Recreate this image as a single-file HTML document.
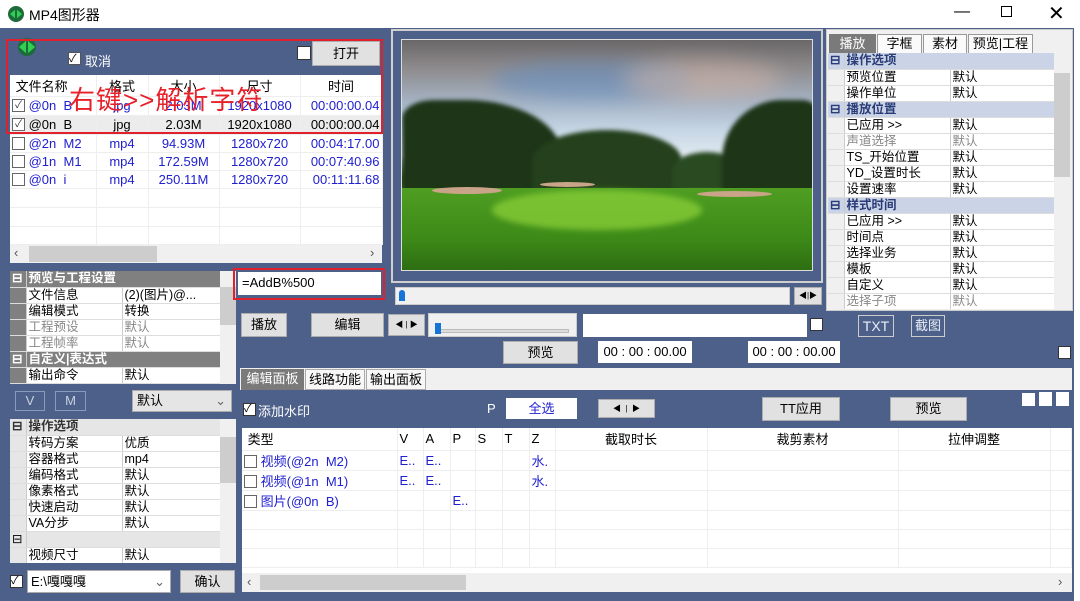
<!DOCTYPE html>
<html><head><meta charset="utf-8"><style>
*{box-sizing:border-box;margin:0;padding:0}
body{width:1080px;height:601px;overflow:hidden;background:#4d6089;font-family:"Liberation Sans","Noto Sans CJK SC",sans-serif;font-size:13px;color:#000;position:relative}
.a{position:absolute}
.w{background:#fff}
.btn{position:absolute;background:#e1e1e1;border:1px solid #adadad;text-align:center;font-size:13px}
.cb{position:absolute;width:13px;height:13px;background:#fff;border:1px solid #333}
.ic{display:inline-block;width:13px;height:13px;border:1px solid #666;background:#fff;vertical-align:middle;position:relative;font-size:10px;line-height:11px;text-align:center;color:#333;margin-top:-2px}
.blue{color:#2020d0}
.g td{border-right:1px solid #eee;border-bottom:1px solid #eee}
table{border-collapse:collapse;table-layout:fixed}
td{white-space:nowrap;overflow:hidden;padding:0 2px}
.pg td{height:16px;line-height:15px;font-size:12.5px;border-bottom:1px solid #ddd;border-right:1px solid #ccc}
</style></head><body>
<!-- title -->
<div class="a w" style="left:0;top:0;width:1080px;height:28px"></div>
<svg class="a" style="left:7px;top:5px" width="18" height="18"><circle cx="9" cy="9" r="8" fill="#1d6b3a"/><path d="M3 9L9 4L15 9L9 14Z" fill="#32d052"/><rect x="8" y="3" width="2" height="12" fill="#1d6b3a"/></svg>
<div class="a" style="left:29px;top:5px;font-size:14px">MP4图形器</div>
<div class="a" style="left:954px;top:3px;font-size:16px">—</div>
<div class="a" style="left:1001px;top:6px;width:11px;height:11px;border:1px solid #000"></div>
<div class="a" style="left:1048px;top:1px;font-size:20px;font-weight:300">✕</div>
<div class="a" style="left:1074px;top:28px;width:6px;height:573px;background:#fff"></div>

<!-- file list area -->
<svg class="a" style="left:15px;top:36px" width="24" height="24"><circle cx="12" cy="11" r="9" fill="#1d6b3a"/><path d="M4 11L12 4L20 11L12 18Z" fill="#32d052"/><rect x="11" y="3" width="2" height="16" fill="#1d6b3a"/></svg>
<div class="cb" style="left:68px;top:52px;border-color:#555"><span style="position:absolute;left:0;top:-3px;font-size:11px">✓</span></div>
<div class="a" style="left:85px;top:51px;color:#fff">取消</div>
<div class="cb" style="left:297px;top:46px;width:14px;height:14px"></div>
<div class="btn" style="left:312px;top:41px;width:68px;height:25px;line-height:23px">打开</div>
<div class="a w" style="left:10px;top:75px;width:372px;height:188px">
 <table class="g" style="width:372px;font-size:13px">
  <col style="width:86px"><col style="width:52px"><col style="width:71px"><col style="width:81px"><col style="width:82px">
  <tr style="height:21px"><td>&nbsp;文件名称</td><td style="text-align:center">格式</td><td style="text-align:center">大小</td><td style="text-align:center">尺寸</td><td style="text-align:center">时间</td></tr>
  <tr style="height:19px" class="blue"><td><span class="ic">✓</span> @0n&nbsp; B</td><td style="text-align:center">jpg</td><td style="text-align:center">2.03M</td><td style="text-align:center">1920x1080</td><td style="text-align:right">00:00:00.04</td></tr>
  <tr style="height:19px;background:#ececec"><td><span class="ic">✓</span> @0n&nbsp; B</td><td style="text-align:center">jpg</td><td style="text-align:center">2.03M</td><td style="text-align:center">1920x1080</td><td style="text-align:right">00:00:00.04</td></tr>
  <tr style="height:18px" class="blue"><td><span class="ic"></span> @2n&nbsp; M2</td><td style="text-align:center">mp4</td><td style="text-align:center">94.93M</td><td style="text-align:center">1280x720</td><td style="text-align:right">00:04:17.00</td></tr>
  <tr style="height:18px" class="blue"><td><span class="ic"></span> @1n&nbsp; M1</td><td style="text-align:center">mp4</td><td style="text-align:center">172.59M</td><td style="text-align:center">1280x720</td><td style="text-align:right">00:07:40.96</td></tr>
  <tr style="height:18px" class="blue"><td><span class="ic"></span> @0n&nbsp; i</td><td style="text-align:center">mp4</td><td style="text-align:center">250.11M</td><td style="text-align:center">1280x720</td><td style="text-align:right">00:11:11.68</td></tr>
  <tr style="height:19px"><td></td><td></td><td></td><td></td><td></td></tr>
  <tr style="height:19px"><td></td><td></td><td></td><td></td><td></td></tr>
  <tr style="height:18px"><td></td><td></td><td></td><td></td><td></td></tr>
 </table>
 <div class="a" style="left:0;top:170px;width:372px;height:18px;background:#f0f0f0"></div>
 <div class="a" style="left:19px;top:171px;width:128px;height:16px;background:#cdcdcd"></div>
 <div class="a" style="left:4px;top:170px;color:#555">‹</div><div class="a" style="left:360px;top:170px;color:#555">›</div>
</div>
<div class="a" style="left:6px;top:39px;width:377px;height:95px;border:2px solid #e0202a"></div>
<div class="a" style="left:69px;top:80px;font-size:26px;color:#e8202a;letter-spacing:1px">右键&gt;&gt;解析字符</div>

<!-- left property grid 1 -->
<div class="a w" style="left:10px;top:271px;width:226px;height:113px;overflow:hidden">
<table class="pg" style="width:210px">
<col style="width:16px"><col style="width:96px"><col style="width:98px">
<tr style="background:#808080;color:#fff;font-weight:bold"><td>⊟</td><td colspan="2">预览与工程设置</td></tr>
<tr><td style="background:#808080"></td><td>文件信息</td><td>(2)(图片)@...</td></tr>
<tr><td style="background:#808080"></td><td>编辑模式</td><td>转换</td></tr>
<tr style="color:#888"><td style="background:#808080"></td><td>工程预设</td><td>默认</td></tr>
<tr style="color:#888"><td style="background:#808080"></td><td>工程帧率</td><td>默认</td></tr>
<tr style="background:#808080;color:#fff;font-weight:bold"><td>⊟</td><td colspan="2">自定义|表达式</td></tr>
<tr><td style="background:#808080"></td><td>输出命令</td><td>默认</td></tr>
</table>
<div class="a" style="left:210px;top:0;width:16px;height:113px;background:#f0f0f0"></div>
<div class="a" style="left:210px;top:16px;width:16px;height:38px;background:#cdcdcd"></div>
</div>
<div class="a" style="left:15px;top:391px;width:30px;height:20px;border:1px solid #8a9abb;color:#c8d0e0;text-align:center;line-height:18px">V</div>
<div class="a" style="left:55px;top:391px;width:31px;height:20px;border:1px solid #8a9abb;color:#c8d0e0;text-align:center;line-height:18px">M</div>
<div class="a" style="left:132px;top:390px;width:100px;height:22px;background:#e5e5e5;border:1px solid #aaa;line-height:20px;padding-left:4px">默认<span style="position:absolute;right:5px;color:#666">⌄</span></div>

<!-- left property grid 2 -->
<div class="a w" style="left:10px;top:419px;width:226px;height:144px;overflow:hidden">
<table class="pg" style="width:210px">
<col style="width:16px"><col style="width:96px"><col style="width:98px">
<tr style="background:#e6e6e6;font-weight:bold;color:#333"><td>⊟</td><td colspan="2">操作选项</td></tr>
<tr><td style="background:#e6e6e6"></td><td>转码方案</td><td>优质</td></tr>
<tr><td style="background:#e6e6e6"></td><td>容器格式</td><td>mp4</td></tr>
<tr><td style="background:#e6e6e6"></td><td>编码格式</td><td>默认</td></tr>
<tr><td style="background:#e6e6e6"></td><td>像素格式</td><td>默认</td></tr>
<tr><td style="background:#e6e6e6"></td><td>快速启动</td><td>默认</td></tr>
<tr><td style="background:#e6e6e6"></td><td>VA分步</td><td>默认</td></tr>
<tr style="background:#e6e6e6"><td>⊟</td><td colspan="2"></td></tr>
<tr><td style="background:#e6e6e6"></td><td>视频尺寸</td><td>默认</td></tr>
</table>
<div class="a" style="left:210px;top:0;width:16px;height:144px;background:#f0f0f0"></div>
<div class="a" style="left:210px;top:18px;width:16px;height:46px;background:#cdcdcd"></div>
</div>
<div class="cb" style="left:10px;top:575px;font-size:11px;line-height:11px">✓</div>
<div class="a" style="left:27px;top:570px;width:144px;height:23px;background:#fff;border:1px solid #aaa;line-height:21px;padding-left:3px">E:\嘎嘎嘎<span style="position:absolute;right:5px;color:#666">⌄</span></div>
<div class="btn" style="left:180px;top:570px;width:55px;height:23px;line-height:21px">确认</div>

<!-- image panel -->
<div class="a" style="left:391px;top:29px;width:432px;height:254px;border:2px solid #cfcfcf;background:#4d6089"></div>
<div class="a" style="left:401px;top:39px;width:412px;height:232px;border:1px solid #ddd;overflow:hidden;background:linear-gradient(180deg,#6a6769 0%,#8d8a8c 12%,#a7b6c8 28%,#c8d8e6 40%,#dfe8ef 50%,#2e5a22 60%,#3f8a1e 66%,#55a826 75%,#3e8a1a 88%,#2b6a12 100%)">
 <div class="a" style="left:90px;top:20px;width:200px;height:40px;background:#5a8cc8;border-radius:50%;opacity:.45;filter:blur(8px)"></div>
 <div class="a" style="left:220px;top:20px;width:160px;height:40px;background:#d8b8a8;border-radius:50%;opacity:.5;filter:blur(10px)"></div>
 <div class="a" style="left:0;top:60px;width:160px;height:92px;background:#1e3518;border-radius:20% 60% 0 0;filter:blur(2px)"></div>
 <div class="a" style="left:130px;top:90px;width:150px;height:62px;background:#24401c;border-radius:50% 50% 0 0;filter:blur(2px)"></div>
 <div class="a" style="left:270px;top:112px;width:70px;height:38px;background:#2a4a22;border-radius:50% 50% 0 0;filter:blur(2px)"></div>
 <div class="a" style="left:320px;top:60px;width:100px;height:100px;background:#1e3518;border-radius:60% 20% 0 0;filter:blur(2px)"></div>
 <div class="a" style="left:0;top:148px;width:412px;height:84px;background:linear-gradient(180deg,#4f9e22,#3d8a18 60%,#2d6c12)"></div>
 <div class="a" style="left:90px;top:150px;width:210px;height:40px;background:#86cc36;border-radius:50%;opacity:.8;filter:blur(3px)"></div>
 <div class="a" style="left:30px;top:147px;width:70px;height:7px;background:#c9a488;border-radius:50%"></div>
 <div class="a" style="left:138px;top:142px;width:55px;height:5px;background:#c9a488;border-radius:50%"></div>
 <div class="a" style="left:295px;top:151px;width:75px;height:6px;background:#c9a488;border-radius:50%"></div>
</div>
<div class="a" style="left:395px;top:287px;width:395px;height:18px;background:#f0f0f0;border:1px solid #ccc"></div>
<div class="a" style="left:399px;top:290px;width:6px;height:11px;background:#1673d8;border-radius:3px 3px 0 0"></div>
<div class="btn" style="left:794px;top:287px;width:28px;height:18px;font-size:8px;line-height:16px">◀|▶</div>

<!-- input -->
<div class="a" style="left:233px;top:268px;width:152px;height:32px;border:2px solid #e0202a"></div>
<div class="a w" style="left:238px;top:272px;width:143px;height:23px;line-height:22px;padding-left:4px">=AddB%500</div>

<!-- control rows -->
<div class="btn" style="left:241px;top:313px;width:46px;height:24px;line-height:22px">播放</div>
<div class="btn" style="left:311px;top:313px;width:73px;height:24px;line-height:22px">编辑</div>
<div class="btn" style="left:388px;top:314px;width:37px;height:22px;font-size:8px;line-height:20px">◀ | ▶</div>
<div class="a" style="left:428px;top:313px;width:149px;height:24px;background:#f0f0f0;border:1px solid #ccc"></div>
<div class="a" style="left:439px;top:329px;width:130px;height:4px;background:#ddd;border:1px solid #bbb"></div>
<div class="a" style="left:435px;top:323px;width:6px;height:11px;background:#1673d8"></div>
<div class="a w" style="left:583px;top:314px;width:224px;height:23px"></div>
<div class="cb" style="left:810px;top:318px"></div>
<div class="a" style="left:858px;top:315px;width:36px;height:22px;border:1px solid #ccc;color:#e8eef8;text-align:center;line-height:20px;font-size:14px">TXT</div>
<div class="a" style="left:911px;top:315px;width:34px;height:22px;border:1px solid #ccc;color:#e8eef8;text-align:center;line-height:20px">截图</div>
<div class="btn" style="left:503px;top:341px;width:75px;height:23px;line-height:21px">预览</div>
<div class="a w" style="left:598px;top:341px;width:94px;height:22px;line-height:22px;text-align:center">00 : 00 : 00.00</div>
<div class="a w" style="left:748px;top:341px;width:92px;height:22px;line-height:22px;text-align:center">00 : 00 : 00.00</div>
<div class="cb" style="left:1058px;top:346px"></div>

<!-- tabs -->
<div class="a" style="left:240px;top:368px;width:832px;height:22px;background:#f0f0f0"></div>
<div class="a" style="left:241px;top:369px;width:63px;height:21px;background:#7a7a7a;color:#fff;text-align:center;line-height:20px">编辑面板</div>
<div class="a" style="left:305px;top:369px;width:60px;height:21px;border:1px solid #aaa;background:#f7f7f7;text-align:center;line-height:19px">线路功能</div>
<div class="a" style="left:366px;top:369px;width:60px;height:21px;border:1px solid #aaa;background:#f7f7f7;text-align:center;line-height:19px">输出面板</div>

<div class="cb" style="left:243px;top:403px;font-size:11px;line-height:11px">✓</div>
<div class="a" style="left:258px;top:401px;color:#fff">添加水印</div>
<div class="a" style="left:487px;top:401px;color:#fff">P</div>
<div class="a w" style="left:506px;top:398px;width:71px;height:21px;text-align:center;line-height:21px;color:#2020d0">全选</div>
<div class="btn" style="left:598px;top:399px;width:57px;height:19px;font-size:8px;line-height:17px">◀ &nbsp;|&nbsp; ▶</div>
<div class="btn" style="left:762px;top:397px;width:78px;height:24px;line-height:22px">TT应用</div>
<div class="btn" style="left:890px;top:397px;width:77px;height:24px;line-height:22px">预览</div>
<div class="cb" style="left:1022px;top:393px;border:none"></div>
<div class="cb" style="left:1039px;top:392px;height:14px;border:none"></div>
<div class="cb" style="left:1056px;top:392px;height:14px;border:none"></div>

<!-- bottom grid -->
<div class="a w" style="left:242px;top:428px;width:830px;height:164px;overflow:hidden">
<table class="g" style="width:830px">
<col style="width:155px"><col style="width:26px"><col style="width:27px"><col style="width:25px"><col style="width:27px"><col style="width:27px"><col style="width:26px"><col style="width:152px"><col style="width:191px"><col style="width:152px"><col>
<tr style="height:22px"><td>&nbsp;类型</td><td>V</td><td>A</td><td>P</td><td>S</td><td>T</td><td>Z</td><td style="text-align:center">截取时长</td><td style="text-align:center">裁剪素材</td><td style="text-align:center">拉伸调整</td><td></td></tr>
<tr style="height:19px" class="blue"><td><span class="ic"></span> 视频(@2n&nbsp; M2)</td><td>E..</td><td>E..</td><td></td><td></td><td></td><td>水.</td><td></td><td></td><td></td><td></td></tr>
<tr style="height:19px" class="blue"><td><span class="ic"></span> 视频(@1n&nbsp; M1)</td><td>E..</td><td>E..</td><td></td><td></td><td></td><td>水.</td><td></td><td></td><td></td><td></td></tr>
<tr style="height:19px" class="blue"><td><span class="ic"></span> 图片(@0n&nbsp; B)</td><td></td><td></td><td>E..</td><td></td><td></td><td></td><td></td><td></td><td></td><td></td></tr>
<tr style="height:19px"><td></td><td></td><td></td><td></td><td></td><td></td><td></td><td></td><td></td><td></td><td></td></tr>
<tr style="height:19px"><td></td><td></td><td></td><td></td><td></td><td></td><td></td><td></td><td></td><td></td><td></td></tr>
<tr style="height:19px"><td></td><td></td><td></td><td></td><td></td><td></td><td></td><td></td><td></td><td></td><td></td></tr>
</table>
<div class="a" style="left:0;top:145px;width:830px;height:19px;background:#f0f0f0"></div>
<div class="a" style="left:18px;top:147px;width:206px;height:15px;background:#cdcdcd"></div>
<div class="a" style="left:5px;top:146px;color:#555">‹</div><div class="a" style="left:816px;top:146px;color:#555">›</div>
</div>

<!-- right panel -->
<div class="a" style="left:826px;top:29px;width:247px;height:282px;background:#f0f0f0;border:1px solid #ccc"></div>
<div class="a" style="left:829px;top:34px;width:47px;height:20px;background:#7a7a7a;color:#fff;text-align:center;line-height:19px">播放</div>
<div class="a" style="left:877px;top:34px;width:45px;height:20px;border:1px solid #999;background:#fafafa;text-align:center;line-height:18px">字框</div>
<div class="a" style="left:923px;top:34px;width:44px;height:20px;border:1px solid #999;background:#fafafa;text-align:center;line-height:18px">素材</div>
<div class="a" style="left:968px;top:34px;width:65px;height:20px;border:1px solid #999;background:#fafafa;text-align:center;line-height:18px">预览|工程</div>
<div class="a w" style="left:828px;top:53px;width:242px;height:256px;overflow:hidden">
<table class="pg" style="width:226px">
<col style="width:16px"><col style="width:106px"><col style="width:104px">
<tr style="background:#cad4e6;color:#2a3c78;font-weight:bold"><td>⊟</td><td colspan="2">操作选项</td></tr>
<tr><td style="background:#f0f0f0"></td><td>预览位置</td><td>默认</td></tr>
<tr><td style="background:#f0f0f0"></td><td>操作单位</td><td>默认</td></tr>
<tr style="background:#cad4e6;color:#2a3c78;font-weight:bold"><td>⊟</td><td colspan="2">播放位置</td></tr>
<tr><td style="background:#f0f0f0"></td><td>已应用 &gt;&gt;</td><td>默认</td></tr>
<tr style="color:#888"><td style="background:#f0f0f0"></td><td>声道选择</td><td>默认</td></tr>
<tr><td style="background:#f0f0f0"></td><td>TS_开始位置</td><td>默认</td></tr>
<tr><td style="background:#f0f0f0"></td><td>YD_设置时长</td><td>默认</td></tr>
<tr><td style="background:#f0f0f0"></td><td>设置速率</td><td>默认</td></tr>
<tr style="background:#cad4e6;color:#2a3c78;font-weight:bold"><td>⊟</td><td colspan="2">样式时间</td></tr>
<tr><td style="background:#f0f0f0"></td><td>已应用 &gt;&gt;</td><td>默认</td></tr>
<tr><td style="background:#f0f0f0"></td><td>时间点</td><td>默认</td></tr>
<tr><td style="background:#f0f0f0"></td><td>选择业务</td><td>默认</td></tr>
<tr><td style="background:#f0f0f0"></td><td>模板</td><td>默认</td></tr>
<tr><td style="background:#f0f0f0"></td><td>自定义</td><td>默认</td></tr>
<tr style="color:#888"><td style="background:#f0f0f0"></td><td>选择子项</td><td>默认</td></tr>
</table>
<div class="a" style="left:226px;top:0;width:16px;height:256px;background:#f0f0f0"></div>
<div class="a" style="left:226px;top:20px;width:16px;height:104px;background:#cdcdcd"></div>
</div>
</body></html>
